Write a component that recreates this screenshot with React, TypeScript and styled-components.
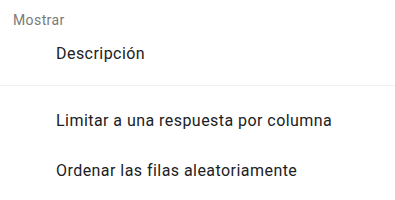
import styled, { createGlobalStyle } from "styled-components";

const GlobalStyle = createGlobalStyle`
    html, body {
        margin: 0;
        padding: 0;
        background: #ffffff;
        font-family: Roboto, "Liberation Sans", Arial, sans-serif;
    }
`;

const Menu = styled.div`
    display: flex;
    flex-direction: column;
    width: 395px;
    background-color: #ffffff;
`;

const SectionTitle = styled.div`
    padding: 10px 0 0 13px;
    height: 19px;
    line-height: 20px;
    font-size: 14px;
    letter-spacing: 0.4px;
    color: #7a7a7a;
`;

const MenuItem = styled.div`
    display: flex;
    align-items: center;
    height: 50px;
    padding-left: 56px;
    box-sizing: border-box;
    font-size: 16px;
    line-height: 24px;
    letter-spacing: 0.45px;
    color: #202124;
    cursor: pointer;
`;

const Divider = styled.hr`
    border: none;
    height: 1px;
    margin: 6px 0 10px;
    background-color: #f0f0f0;
`;

export default function App() {
    return (
        <>
            <GlobalStyle />
            <Menu>
                <SectionTitle>Mostrar</SectionTitle>
                <MenuItem>Descripción</MenuItem>
                <Divider />
                <MenuItem>Limitar a una respuesta por columna</MenuItem>
                <MenuItem>Ordenar las filas aleatoriamente</MenuItem>
            </Menu>
        </>
    );
}
